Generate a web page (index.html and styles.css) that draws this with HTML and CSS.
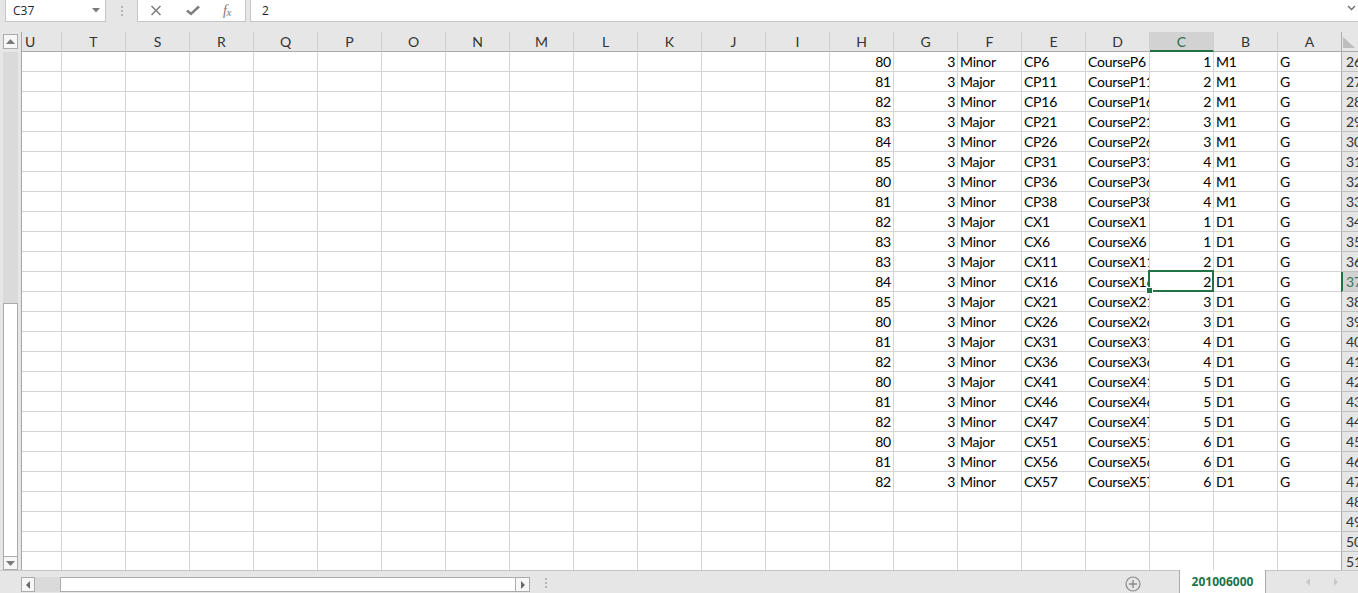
FILE: index.html
```html
<!DOCTYPE html>
<html lang="en">
<head>
<meta charset="utf-8">
<title>201006000 - Excel</title>
<link rel="stylesheet" href="styles.css">
</head>
<body>
<div class="app">
  <div class="formula-bar">
    <div class="name-box"><span class="ref">C37</span><svg class="dd" width="8" height="5" viewBox="0 0 8 5"><polygon points="0,0 8,0 4,4.5" fill="#7a7a7a"/></svg></div>
    <div class="grip"><i></i><i></i><i></i></div>
    <div class="fx-buttons">
      <svg class="ico-x" width="12" height="11" viewBox="0 0 12 11"><path d="M1.5 1 L10.5 10 M10.5 1 L1.5 10" stroke="#7d7d7d" stroke-width="1.5" fill="none"/></svg>
      <svg class="ico-ok" width="14" height="11" viewBox="0 0 14 11"><path d="M1 5.5 L5 9 L13 1.5" stroke="#7d7d7d" stroke-width="2.4" fill="none"/></svg>
      <span class="fx">f<span class="fx-x">x</span></span>
    </div>
    <div class="formula-input"><span class="val">2</span><svg class="chev" width="9" height="6" viewBox="0 0 9 6"><path d="M1 1 L4.5 4.5 L8 1" stroke="#6a6a6a" stroke-width="1.3" fill="none"/></svg></div>
  </div>

  <div class="sheet">
    <div class="vscroll">
      <div class="sb-btn"><svg width="9" height="5" viewBox="0 0 9 5"><polygon points="0,5 9,5 4.5,0" fill="#7a7a7a"/></svg></div>
      <div class="sb-track"><div class="sb-thumb"></div></div>
      <div class="sb-btn down"><svg width="9" height="5" viewBox="0 0 9 5"><polygon points="0,0 9,0 4.5,5" fill="#7a7a7a"/></svg></div>
    </div>
    <div class="grid-wrap">
      <div class="grid">
        <div class="h hu">U</div><div class="h">T</div><div class="h">S</div><div class="h">R</div><div class="h">Q</div><div class="h">P</div><div class="h">O</div><div class="h">N</div><div class="h">M</div><div class="h">L</div><div class="h">K</div><div class="h">J</div><div class="h">I</div><div class="h">H</div><div class="h">G</div><div class="h">F</div><div class="h">E</div><div class="h">D</div><div class="h hsel">C</div><div class="h">B</div><div class="h">A</div><div class="h corner"><svg width="12" height="11" viewBox="0 0 12 11"><polygon points="0,0 0,11 12,11" fill="#bdbdbd"/></svg></div>

        <div></div><div></div><div></div><div></div><div></div><div></div><div></div><div></div><div></div><div></div><div></div><div></div><div></div><div class="n">80</div><div class="n">3</div><div>Minor</div><div>CP6</div><div>CourseP6</div><div class="n">1</div><div>M1</div><div>G</div><div class="r">26</div>
        <div></div><div></div><div></div><div></div><div></div><div></div><div></div><div></div><div></div><div></div><div></div><div></div><div></div><div class="n">81</div><div class="n">3</div><div>Major</div><div>CP11</div><div>CourseP11</div><div class="n">2</div><div>M1</div><div>G</div><div class="r">27</div>
        <div></div><div></div><div></div><div></div><div></div><div></div><div></div><div></div><div></div><div></div><div></div><div></div><div></div><div class="n">82</div><div class="n">3</div><div>Minor</div><div>CP16</div><div>CourseP16</div><div class="n">2</div><div>M1</div><div>G</div><div class="r">28</div>
        <div></div><div></div><div></div><div></div><div></div><div></div><div></div><div></div><div></div><div></div><div></div><div></div><div></div><div class="n">83</div><div class="n">3</div><div>Major</div><div>CP21</div><div>CourseP21</div><div class="n">3</div><div>M1</div><div>G</div><div class="r">29</div>
        <div></div><div></div><div></div><div></div><div></div><div></div><div></div><div></div><div></div><div></div><div></div><div></div><div></div><div class="n">84</div><div class="n">3</div><div>Minor</div><div>CP26</div><div>CourseP26</div><div class="n">3</div><div>M1</div><div>G</div><div class="r">30</div>
        <div></div><div></div><div></div><div></div><div></div><div></div><div></div><div></div><div></div><div></div><div></div><div></div><div></div><div class="n">85</div><div class="n">3</div><div>Major</div><div>CP31</div><div>CourseP31</div><div class="n">4</div><div>M1</div><div>G</div><div class="r">31</div>
        <div></div><div></div><div></div><div></div><div></div><div></div><div></div><div></div><div></div><div></div><div></div><div></div><div></div><div class="n">80</div><div class="n">3</div><div>Minor</div><div>CP36</div><div>CourseP36</div><div class="n">4</div><div>M1</div><div>G</div><div class="r">32</div>
        <div></div><div></div><div></div><div></div><div></div><div></div><div></div><div></div><div></div><div></div><div></div><div></div><div></div><div class="n">81</div><div class="n">3</div><div>Minor</div><div>CP38</div><div>CourseP38</div><div class="n">4</div><div>M1</div><div>G</div><div class="r">33</div>
        <div></div><div></div><div></div><div></div><div></div><div></div><div></div><div></div><div></div><div></div><div></div><div></div><div></div><div class="n">82</div><div class="n">3</div><div>Major</div><div>CX1</div><div>CourseX1</div><div class="n">1</div><div>D1</div><div>G</div><div class="r">34</div>
        <div></div><div></div><div></div><div></div><div></div><div></div><div></div><div></div><div></div><div></div><div></div><div></div><div></div><div class="n">83</div><div class="n">3</div><div>Minor</div><div>CX6</div><div>CourseX6</div><div class="n">1</div><div>D1</div><div>G</div><div class="r">35</div>
        <div></div><div></div><div></div><div></div><div></div><div></div><div></div><div></div><div></div><div></div><div></div><div></div><div></div><div class="n">83</div><div class="n">3</div><div>Major</div><div>CX11</div><div>CourseX11</div><div class="n">2</div><div>D1</div><div>G</div><div class="r">36</div>
        <div></div><div></div><div></div><div></div><div></div><div></div><div></div><div></div><div></div><div></div><div></div><div></div><div></div><div class="n">84</div><div class="n">3</div><div>Minor</div><div>CX16</div><div>CourseX16</div><div class="n sel">2</div><div>D1</div><div>G</div><div class="r rsel">37</div>
        <div></div><div></div><div></div><div></div><div></div><div></div><div></div><div></div><div></div><div></div><div></div><div></div><div></div><div class="n">85</div><div class="n">3</div><div>Major</div><div>CX21</div><div>CourseX21</div><div class="n">3</div><div>D1</div><div>G</div><div class="r">38</div>
        <div></div><div></div><div></div><div></div><div></div><div></div><div></div><div></div><div></div><div></div><div></div><div></div><div></div><div class="n">80</div><div class="n">3</div><div>Minor</div><div>CX26</div><div>CourseX26</div><div class="n">3</div><div>D1</div><div>G</div><div class="r">39</div>
        <div></div><div></div><div></div><div></div><div></div><div></div><div></div><div></div><div></div><div></div><div></div><div></div><div></div><div class="n">81</div><div class="n">3</div><div>Major</div><div>CX31</div><div>CourseX31</div><div class="n">4</div><div>D1</div><div>G</div><div class="r">40</div>
        <div></div><div></div><div></div><div></div><div></div><div></div><div></div><div></div><div></div><div></div><div></div><div></div><div></div><div class="n">82</div><div class="n">3</div><div>Minor</div><div>CX36</div><div>CourseX36</div><div class="n">4</div><div>D1</div><div>G</div><div class="r">41</div>
        <div></div><div></div><div></div><div></div><div></div><div></div><div></div><div></div><div></div><div></div><div></div><div></div><div></div><div class="n">80</div><div class="n">3</div><div>Major</div><div>CX41</div><div>CourseX41</div><div class="n">5</div><div>D1</div><div>G</div><div class="r">42</div>
        <div></div><div></div><div></div><div></div><div></div><div></div><div></div><div></div><div></div><div></div><div></div><div></div><div></div><div class="n">81</div><div class="n">3</div><div>Minor</div><div>CX46</div><div>CourseX46</div><div class="n">5</div><div>D1</div><div>G</div><div class="r">43</div>
        <div></div><div></div><div></div><div></div><div></div><div></div><div></div><div></div><div></div><div></div><div></div><div></div><div></div><div class="n">82</div><div class="n">3</div><div>Minor</div><div>CX47</div><div>CourseX47</div><div class="n">5</div><div>D1</div><div>G</div><div class="r">44</div>
        <div></div><div></div><div></div><div></div><div></div><div></div><div></div><div></div><div></div><div></div><div></div><div></div><div></div><div class="n">80</div><div class="n">3</div><div>Major</div><div>CX51</div><div>CourseX51</div><div class="n">6</div><div>D1</div><div>G</div><div class="r">45</div>
        <div></div><div></div><div></div><div></div><div></div><div></div><div></div><div></div><div></div><div></div><div></div><div></div><div></div><div class="n">81</div><div class="n">3</div><div>Minor</div><div>CX56</div><div>CourseX56</div><div class="n">6</div><div>D1</div><div>G</div><div class="r">46</div>
        <div></div><div></div><div></div><div></div><div></div><div></div><div></div><div></div><div></div><div></div><div></div><div></div><div></div><div class="n">82</div><div class="n">3</div><div>Minor</div><div>CX57</div><div>CourseX57</div><div class="n">6</div><div>D1</div><div>G</div><div class="r">47</div>
        <div></div><div></div><div></div><div></div><div></div><div></div><div></div><div></div><div></div><div></div><div></div><div></div><div></div><div></div><div></div><div></div><div></div><div></div><div></div><div></div><div></div><div class="r">48</div>
        <div></div><div></div><div></div><div></div><div></div><div></div><div></div><div></div><div></div><div></div><div></div><div></div><div></div><div></div><div></div><div></div><div></div><div></div><div></div><div></div><div></div><div class="r">49</div>
        <div></div><div></div><div></div><div></div><div></div><div></div><div></div><div></div><div></div><div></div><div></div><div></div><div></div><div></div><div></div><div></div><div></div><div></div><div></div><div></div><div></div><div class="r">50</div>
        <div></div><div></div><div></div><div></div><div></div><div></div><div></div><div></div><div></div><div></div><div></div><div></div><div></div><div></div><div></div><div></div><div></div><div></div><div></div><div></div><div></div><div class="r">51</div>
      </div>
    </div>
  </div>

  <div class="bottom-bar">
    <div class="hscroll">
      <div class="hs-btn"><svg width="4" height="8" viewBox="0 0 4 8"><polygon points="4,0 4,8 0,4" fill="#6a6a6a"/></svg></div>
      <div class="hs-track"><div class="hs-thumb"></div></div>
      <div class="hs-btn"><svg width="4" height="8" viewBox="0 0 4 8"><polygon points="0,0 0,8 4,4" fill="#6a6a6a"/></svg></div>
    </div>
    <div class="grip vgrip"><i></i><i></i><i></i></div>
    <div class="spacer"></div>
    <div class="add-sheet"><svg width="16" height="16" viewBox="0 0 16 16"><circle cx="8" cy="8" r="7" stroke="#8a8a8a" stroke-width="1.2" fill="none"/><path d="M8 4 V12 M4 8 H12" stroke="#8a8a8a" stroke-width="1.4"/></svg></div>
    <div class="tab">201006000</div>
    <div class="tab-nav">
      <svg width="4" height="8" viewBox="0 0 4 8"><polygon points="4,0 4,8 0,4" fill="#c8c8c8"/></svg>
      <svg width="4" height="8" viewBox="0 0 4 8"><polygon points="0,0 0,8 4,4" fill="#c8c8c8"/></svg>
    </div>
  </div>
</div>
</body>
</html>
```

FILE: styles.css
```css
* { box-sizing: border-box; }

html, body {
  margin: 0;
  padding: 0;
  background: #e6e6e6;
  overflow: hidden;
}

.app {
  width: 1358px;
  height: 593px;
  display: flex;
  flex-direction: column;
  font-family: "Open Sans", "Noto Sans", sans-serif;
  color: #222;
}

/* ---------- formula bar ---------- */
.formula-bar {
  display: flex;
  height: 22px;
  margin-bottom: 10px;
  padding-left: 5px;
  flex-shrink: 0;
}

.name-box {
  width: 101px;
  height: 23px;
  margin-top: -1px;
  background: #fff;
  border: 1px solid #c6c6c6;
  display: flex;
  align-items: center;
  justify-content: space-between;
  padding: 0 5px 0 7px;
  font-size: 12px;
  color: #262626;
}

.grip {
  width: 31px;
  display: flex;
  flex-direction: column;
  align-items: center;
  justify-content: center;
  gap: 2px;
}
.grip i {
  display: block;
  width: 2px;
  height: 2px;
  background: #b3b3b3;
}

.fx-buttons {
  width: 109px;
  height: 23px;
  margin-top: -1px;
  background: #fff;
  border: 1px solid #c6c6c6;
  display: flex;
  align-items: center;
  padding-left: 12px;
}
.ico-x { margin-right: 24px; }
.ico-ok { margin-right: 23px; }
.fx {
  font-family: "Liberation Serif", serif;
  font-style: italic;
  font-size: 14px;
  color: #7a7a7a;
  letter-spacing: -0.5px;
}
.fx-x {
  font-size: 11px;
  position: relative;
  top: 1px;
}

.formula-input {
  flex: 1;
  height: 23px;
  margin-top: -1px;
  margin-left: 4px;
  margin-right: -1px;
  background: #fff;
  border: 1px solid #c6c6c6;
  display: flex;
  align-items: center;
  justify-content: space-between;
  padding: 0 2px 0 11px;
  font-size: 12px;
  color: #262626;
}
.chev { margin-top: -5px; }

/* ---------- sheet ---------- */
.sheet {
  display: flex;
  height: 538px;
  flex-shrink: 0;
}

.vscroll {
  width: 21px;
  display: flex;
  flex-direction: column;
  padding: 2px 3px 0 3px;
}
.sb-btn {
  height: 15px;
  border: 1px solid #ababab;
  background: #f7f7f7;
  display: flex;
  align-items: center;
  justify-content: center;
  flex-shrink: 0;
}
.sb-btn.down { height: 14px; }
.sb-track {
  flex: 1;
  margin-top: 3px;
  background: #dadada;
  display: flex;
  flex-direction: column;
  justify-content: flex-end;
}
.sb-thumb {
  height: 253px;
  background: #fff;
  border: 1px solid #ababab;
  border-bottom: none;
}

.grid-wrap {
  flex: 1;
  overflow: hidden;
  border-left: 1px solid #a6a6a6;
  background: #fff;
}

.grid {
  display: grid;
  grid-template-columns: 40px repeat(20, 64px) 32px;
  grid-auto-rows: 20px;
  font-family: "Lato", "Open Sans", sans-serif;
  font-size: 14px;
  letter-spacing: -0.25px;
  color: #000;
}

.grid > div {
  border-right: 1px solid #d4d4d4;
  border-bottom: 1px solid #d4d4d4;
  background: #fff;
  overflow: hidden;
  white-space: nowrap;
  padding: 1px 2px 0 2px;
  line-height: 18px;
}
.grid > div.n {
  text-align: right;
  padding-right: 2px;
}
.grid > div:nth-child(22n+21) {
  border-right-color: #ababab;
}

.grid > .h {
  background: #e6e6e6;
  text-align: center;
  color: #333;
  border-right-color: #d0d0d0;
  border-bottom-color: #ababab;
  padding: 1px 0 0 0;
  letter-spacing: 0;
}
.grid > .hu {
  text-align: left;
  padding-left: 3px;
}
.grid > .hsel {
  background: #d2d2d2;
  color: #2d6a4c;
  border-bottom: 2px solid #217346;
}
.grid > .corner {
  border-right: none;
  padding: 5px 0 0 1px;
  text-align: left;
  line-height: 0;
}

.grid > .r {
  background: #e6e6e6;
  color: #333;
  border-right: none;
  border-bottom-color: #c0c0c0;
  padding-left: 4px;
  letter-spacing: 0;
}
.grid > .rsel {
  background: #d2d2d2;
  color: #3d7656;
  box-shadow: -1px 0 0 #217346, inset 1px 0 0 #217346;
}

.grid > .sel {
  position: relative;
  overflow: visible;
}
.grid > .sel::after {
  content: "";
  position: absolute;
  left: -2px;
  top: -2px;
  right: -1px;
  bottom: -1px;
  border: 2px solid #217346;
  z-index: 2;
}
.grid > .sel::before {
  content: "";
  position: absolute;
  left: -4px;
  bottom: -3px;
  width: 5px;
  height: 5px;
  background: #217346;
  border: 1px solid #fff;
  box-sizing: content-box;
  z-index: 3;
}

/* ---------- bottom bar ---------- */
.bottom-bar {
  height: 23px;
  border-top: 1px solid #c6c6c6;
  display: flex;
  align-items: flex-start;
  flex-shrink: 0;
}

.hscroll {
  width: 509px;
  height: 15px;
  margin: 6px 0 0 21px;
  display: flex;
}
.hs-btn {
  width: 14px;
  height: 15px;
  border: 1px solid #ababab;
  background: #f7f7f7;
  display: flex;
  align-items: center;
  justify-content: center;
  flex-shrink: 0;
}
.hs-btn:last-child { width: 15px; }
.hs-track {
  flex: 1;
  background: #dadada;
  padding-left: 25px;
  display: flex;
}
.hs-thumb {
  flex: 1;
  background: #fff;
  border: 1px solid #ababab;
  border-right: none;
}

.vgrip {
  width: 6px;
  margin: 7px 0 0 13px;
}

.spacer { flex: 1; }

.add-sheet {
  width: 16px;
  height: 16px;
  margin: 4px 38px 0 0;
}

.tab {
  width: 87px;
  height: 23px;
  margin-top: -1px;
  background: #fff;
  border-left: 1px solid #ababab;
  border-right: 1px solid #ababab;
  text-align: center;
  line-height: 23px;
  font-size: 12px;
  font-weight: bold;
  color: #217346;
}

.tab-nav {
  width: 92px;
  height: 22px;
  display: flex;
  align-items: center;
  padding-left: 40px;
  gap: 24px;
}
```
